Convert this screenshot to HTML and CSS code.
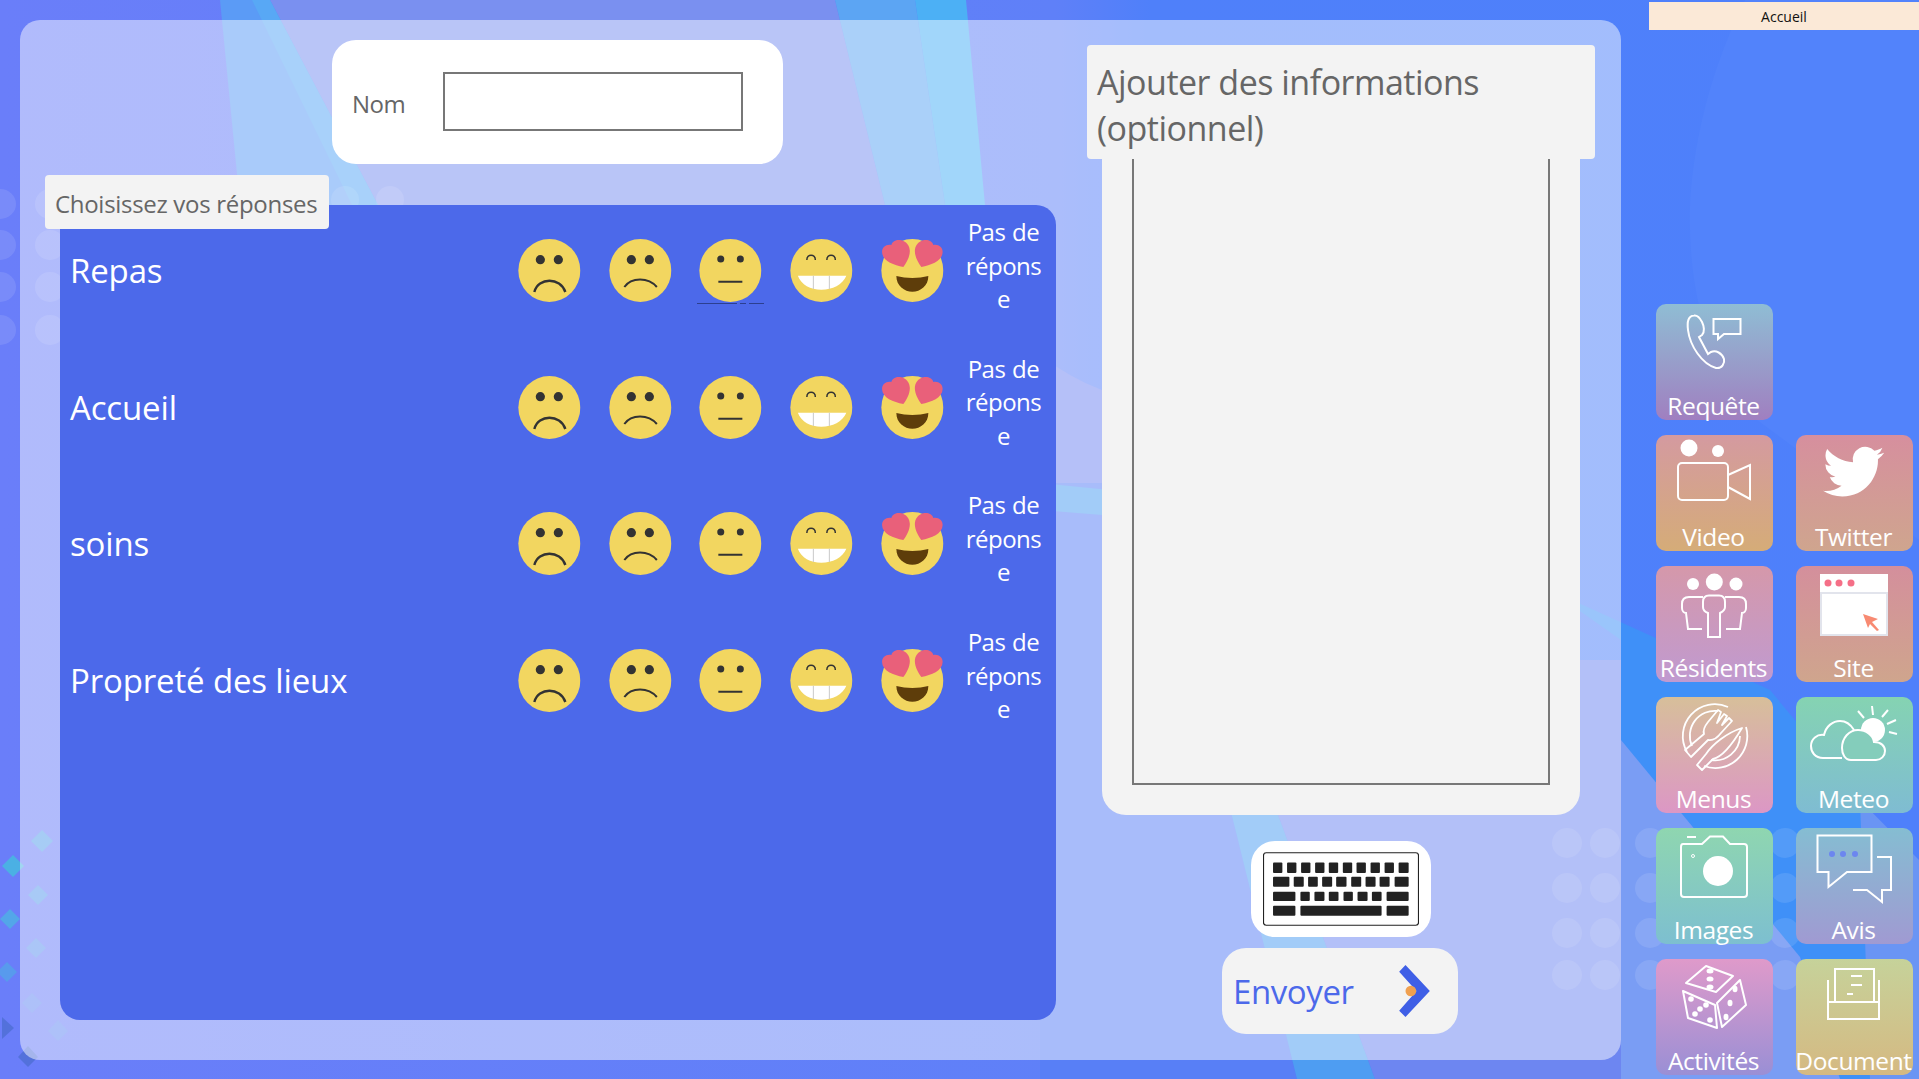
FILE: index.html
```html
<!DOCTYPE html>
<html lang="fr">
<head>
    <meta charset="UTF-8">
    <title>Accueil</title>
    <link rel="stylesheet" href="styles.css">
</head>
<body>
    <!-- decorative wallpaper -->
    <svg class="wallpaper" viewBox="0 0 1919 1079" preserveAspectRatio="none">
        <defs>
            <linearGradient id="wall" x1="0" y1="0" x2="1" y2="0">
                <stop offset="0" stop-color="#6a7ef9"/>
                <stop offset="0.55" stop-color="#5f80f8"/>
                <stop offset="0.6" stop-color="#4f80fa"/>
                <stop offset="1" stop-color="#4e80fb"/>
            </linearGradient>
        </defs>
        <rect width="1919" height="1079" fill="url(#wall)"/>
        <path d="M270 0H835L885 205H378Z" fill="#7a90f0"/>
        <path d="M220 0H270L378 205H240Z" fill="#5b9bf6"/>
        <path d="M252 0H270L378 205H352Z" fill="#58a8f5"/>
        <path d="M835 0H915L945 205H885Z" fill="#5ca5f3"/>
        <path d="M915 0H966L985 205H945Z" fill="#4cb0f5"/>
        <path d="M1040 355Q1070 378 1102 390V483H1040Z" fill="#7186f2"/>
        <path d="M1040 483H1102C1180 560 1210 740 1233 820L1297 1079H1040Z" fill="#587ff6"/>
        <path d="M1040 483L1110 490C1190 560 1240 720 1280 820L1375 1079H1297L1233 820C1200 700 1170 560 1102 515L1040 510Z" fill="#4e9df2"/>
        <path d="M1280 820C1260 770 1240 720 1215 660H1621V1079H1375Z" fill="#6d86f1"/>
        <path d="M1550 590L1770 690L1919 870V1079H1621V640Z" fill="#3f90f8"/>
        <path d="M1621 740L1800 957L1840 1079H1621Z" fill="#7a9df4"/>
        <path d="M1860 800L1919 860V1079H1870Z" fill="#6a95f4"/>
        <path d="M1745 0C1700 90 1688 180 1690 230C1692 290 1700 320 1730 400L1919 540V0Z" fill="#5283fb"/>
        <g fill="#fff" opacity=".1">
            <ellipse cx="0" cy="204" rx="16" ry="15"/><ellipse cx="50" cy="204" rx="15" ry="15"/>
            <ellipse cx="0" cy="245" rx="16" ry="15"/><ellipse cx="50" cy="245" rx="15" ry="15"/>
            <ellipse cx="0" cy="287" rx="16" ry="15"/><ellipse cx="50" cy="287" rx="15" ry="15"/>
            <ellipse cx="0" cy="330" rx="16" ry="15"/><ellipse cx="50" cy="330" rx="15" ry="15"/>
            <ellipse cx="345" cy="200" rx="14" ry="14"/><ellipse cx="390" cy="200" rx="14" ry="14"/>
            <circle cx="1567" cy="843" r="15"/><circle cx="1605" cy="843" r="15"/>
            <circle cx="1567" cy="888" r="15"/><circle cx="1605" cy="888" r="15"/>
            <circle cx="1567" cy="933" r="15"/><circle cx="1605" cy="933" r="15"/>
            <circle cx="1567" cy="975" r="15"/><circle cx="1605" cy="975" r="15"/>
            <circle cx="1650" cy="843" r="15"/><circle cx="1650" cy="888" r="15"/><circle cx="1650" cy="933" r="15"/><circle cx="1650" cy="975" r="15"/>
            <circle cx="1785" cy="843" r="15"/><circle cx="1785" cy="888" r="15"/><circle cx="1785" cy="933" r="15"/><circle cx="1785" cy="975" r="15"/>
        </g>
        <g fill="#3fc6dc">
            <path d="M42 830l11 11-11 11-11-11Z" opacity=".45"/>
            <path d="M13 855l11 11-11 11-11-11Z" opacity=".7"/>
            <path d="M38 885l10 10-10 10-10-10Z" opacity=".4"/>
            <path d="M10 909l10 10-10 10-10-10Z" opacity=".55"/>
            <path d="M36 938l10 10-10 10-10-10Z" opacity=".28"/>
            <path d="M7 962l10 10-10 10-10-10Z" opacity=".4"/>
            <path d="M32 993l10 10-10 10-10-10Z" opacity=".14"/>
            <path d="M58 1020l10 11-10 10-10-10Z" opacity=".14"/>
            <path d="M2 1017l12 11-12 11Z" fill="#4a6ccf" opacity=".7"/>
            <path d="M28 1046l10 11-10 10-10-10Z" fill="#4a6ccf" opacity=".7"/>
        </g>
    </svg>

    <!-- shared smileys -->
    <svg class="sprites" aria-hidden="true">
        <symbol id="face-bad" viewBox="0 0 62 63">
            <ellipse cx="31" cy="31.5" rx="31" ry="31.5" fill="#f2d660"/>
            <circle cx="22" cy="20.7" r="4.6" fill="#333"/><circle cx="40" cy="20.7" r="4.6" fill="#333"/>
            <path d="M16 53C20 38 42 38 47 53" fill="none" stroke="#333" stroke-width="2.4"/>
        </symbol>
        <symbol id="face-low" viewBox="0 0 62 63">
            <ellipse cx="31" cy="31.5" rx="31" ry="31.5" fill="#f2d660"/>
            <circle cx="22" cy="20.7" r="4.6" fill="#333"/><circle cx="40" cy="20.7" r="4.6" fill="#333"/>
            <path d="M15 48C22 38 39 38 47.5 48" fill="none" stroke="#333" stroke-width="2"/>
        </symbol>
        <symbol id="face-mid" viewBox="0 0 62 63">
            <ellipse cx="31" cy="31.5" rx="31" ry="31.5" fill="#f2d660"/>
            <circle cx="21.4" cy="20" r="3.5" fill="#333"/><circle cx="41" cy="20" r="3.5" fill="#333"/>
            <path d="M19 42.7H43" stroke="#333" stroke-width="2"/>
        </symbol>
        <symbol id="face-good" viewBox="0 0 62 63">
            <ellipse cx="31" cy="31.5" rx="31" ry="31.5" fill="#f2d660"/>
            <path d="M16.5 21C16.5 14.500 25 14.500 25 21M36.500 21C36.500 14.500 45 14.500 45 21" fill="none" stroke="#333" stroke-width="1.500"/>
            <path d="M7.500 36.700H56C52 46 42 50.700 31 50.700S11 46 7.500 36.700Z" fill="#fff"/>
            <path d="M23 36.700V50M39 36.700V50" stroke="#c9c9c9" stroke-width="1"/>
        </symbol>
        <symbol id="face-love" viewBox="0 0 62 63">
            <ellipse cx="31" cy="31.5" rx="31" ry="31.5" fill="#f2d660"/>
            <path d="M15 37C25 39.500 37 39.500 47 37C47 47 39 52.700 31 52.700S15 47 15 37Z" fill="#5e3d0a"/>
            <path d="M22 28C12 26 1 22 .7 13C.7 8 5 5 10 6C11 2 15 .5 19 1C25 2 28.500 7 28.500 12C28.500 18 25 24 22 28Z" fill="#e9607a"/>
            <path d="M40 28C50 26 61 22 61.300 13C61.300 8 57 5 52 6C51 2 47 .5 43 1C37 2 33.500 7 33.500 12C33.500 18 37 24 40 28Z" fill="#e9607a"/>
        </symbol>
    </svg>

    <main class="panel">
        <section class="survey">
            <div class="name-card">
                <label class="name-label" for="nom">Nom</label>
                <input class="name-input" id="nom" type="text">
            </div>
            <div class="survey-tag">Choisissez vos réponses</div>
            <div class="survey-board">
                <div class="survey-row">
                    <span class="row-label">Repas</span>
                    <div class="faces">
                        <svg class="face"><use href="#face-bad"/></svg>
                        <svg class="face"><use href="#face-low"/></svg>
                        <svg class="face"><use href="#face-mid"/><path class="face-smear" d="M-2 64.500H65"/></svg>
                        <svg class="face"><use href="#face-good"/></svg>
                        <svg class="face"><use href="#face-love"/></svg>
                    </div>
                    <span class="no-answer">Pas de répons e</span>
                </div>
                <div class="survey-row">
                    <span class="row-label">Accueil</span>
                    <div class="faces">
                        <svg class="face"><use href="#face-bad"/></svg>
                        <svg class="face"><use href="#face-low"/></svg>
                        <svg class="face"><use href="#face-mid"/></svg>
                        <svg class="face"><use href="#face-good"/></svg>
                        <svg class="face"><use href="#face-love"/></svg>
                    </div>
                    <span class="no-answer">Pas de répons e</span>
                </div>
                <div class="survey-row">
                    <span class="row-label">soins</span>
                    <div class="faces">
                        <svg class="face"><use href="#face-bad"/></svg>
                        <svg class="face"><use href="#face-low"/></svg>
                        <svg class="face"><use href="#face-mid"/></svg>
                        <svg class="face"><use href="#face-good"/></svg>
                        <svg class="face"><use href="#face-love"/></svg>
                    </div>
                    <span class="no-answer">Pas de répons e</span>
                </div>
                <div class="survey-row">
                    <span class="row-label">Propreté des lieux</span>
                    <div class="faces">
                        <svg class="face"><use href="#face-bad"/></svg>
                        <svg class="face"><use href="#face-low"/></svg>
                        <svg class="face"><use href="#face-mid"/></svg>
                        <svg class="face"><use href="#face-good"/></svg>
                        <svg class="face"><use href="#face-love"/></svg>
                    </div>
                    <span class="no-answer">Pas de répons e</span>
                </div>
            </div>
        </section>

        <section class="notes">
            <h2 class="notes-title">Ajouter des informations (optionnel)</h2>
            <div class="notes-card">
                <textarea class="notes-input"></textarea>
            </div>
            <button class="keyboard-btn" type="button" aria-label="Clavier">
                <svg class="keyboard-icon" viewBox="188 95 467 220">
                    <rect x="189.500" y="96.500" width="464" height="217" rx="8" fill="none" stroke="#222" stroke-width="3.500"/>
                    <g fill="#222">
                        <rect x="218" y="126" width="28" height="31" rx="3"/><rect x="260" y="126" width="28" height="31" rx="3"/><rect x="302" y="126" width="28" height="31" rx="3"/><rect x="344" y="126" width="28" height="31" rx="3"/><rect x="385" y="126" width="28" height="31" rx="3"/><rect x="427" y="126" width="28" height="31" rx="3"/><rect x="468" y="126" width="28" height="31" rx="3"/><rect x="510" y="126" width="28" height="31" rx="3"/><rect x="552" y="126" width="28" height="31" rx="3"/><rect x="594" y="126" width="30" height="31" rx="3"/>
                        <rect x="218" y="168" width="49" height="30" rx="3"/><rect x="280" y="168" width="30" height="30" rx="3"/><rect x="323" y="168" width="29" height="30" rx="3"/><rect x="365" y="168" width="30" height="30" rx="3"/><rect x="407" y="168" width="31" height="30" rx="3"/><rect x="452" y="168" width="30" height="30" rx="3"/><rect x="495" y="168" width="30" height="30" rx="3"/><rect x="537" y="168" width="30" height="30" rx="3"/><rect x="582" y="168" width="42" height="30" rx="3"/>
                        <rect x="218" y="213" width="67" height="28" rx="3"/><rect x="300" y="213" width="28" height="28" rx="3"/><rect x="342" y="213" width="30" height="28" rx="3"/><rect x="385" y="213" width="29" height="28" rx="3"/><rect x="429" y="213" width="28" height="28" rx="3"/><rect x="471" y="213" width="30" height="28" rx="3"/><rect x="514" y="213" width="29" height="28" rx="3"/><rect x="558" y="213" width="66" height="28" rx="3"/>
                        <rect x="218" y="255" width="67" height="30" rx="3"/><rect x="300" y="255" width="243" height="30" rx="3"/><rect x="558" y="255" width="66" height="30" rx="3"/>
                    </g>
                </svg>
            </button>
            <button class="send-btn" type="button">
                <span>Envoyer</span>
                <svg class="send-icon" viewBox="598 435 92 156">
                    <path d="M598 455L617 435L690 513L617 591L598 572L650 513Z" fill="#3f5fe6"/>
                    <circle cx="633" cy="513" r="16" fill="#f0a050"/>
                </svg>
            </button>
        </section>
    </main>

    <aside class="sidebar">
        <button class="home-btn" type="button">Accueil</button>
        <nav class="tiles">
            <a class="tile tile-requete">
                <svg class="tile-icon" viewBox="0 0 117 84" fill="none" stroke="#fff" stroke-width="2">
                    <path d="M38 11.500C32 12 31 18 32 26C34 42 46 60 60 64C66 65 69 59 68 55C66 49 60 46 55 48L52 50L43 33L46 31C49 28 48 22 46 18C44 14 42 11 38 11.500Z"/>
                    <path d="M57.500 15H84.500V30H68L62 35V30H57.500Z"/>
                </svg>
                <span class="tile-label">Requête</span>
            </a>
            <span class="tile-gap"></span>
            <a class="tile tile-video">
                <svg class="tile-icon" viewBox="0 0 117 84" fill="none" stroke="#fff" stroke-width="2">
                    <circle cx="33" cy="13" r="8.500" fill="#fff" stroke="none"/>
                    <circle cx="62" cy="16" r="6" fill="#fff" stroke="none"/>
                    <rect x="22" y="28" width="50" height="37" rx="4"/>
                    <path d="M72 40L94 30V64L72 52"/>
                </svg>
                <span class="tile-label">Video</span>
            </a>
            <a class="tile tile-twitter">
                <svg class="tile-icon" viewBox="0 0 117 84">
                    <path transform="translate(27 6) scale(2.550)" fill="#fff" d="M23.953 4.570a10 10 0 01-2.825.775 4.958 4.958 0 002.163-2.723c-.951.555-2.005.959-3.127 1.184a4.920 4.920 0 00-8.384 4.482C7.690 8.095 4.067 6.130 1.640 3.162a4.822 4.822 0 00-.666 2.475c0 1.710.870 3.213 2.188 4.096a4.904 4.904 0 01-2.228-.616v.060a4.923 4.923 0 003.946 4.827 4.996 4.996 0 01-2.212.085 4.936 4.936 0 004.604 3.417 9.867 9.867 0 01-6.102 2.105c-.390 0-.779-.023-1.170-.067a13.995 13.995 0 007.557 2.209c9.053 0 13.998-7.496 13.998-13.985 0-.210 0-.420-.015-.630A9.935 9.935 0 0024 4.590z"/>
                </svg>
                <span class="tile-label">Twitter</span>
            </a>
            <a class="tile tile-residents">
                <svg class="tile-icon" viewBox="0 0 117 84" fill="none" stroke="#fff" stroke-width="2">
                    <circle cx="37" cy="18" r="6" fill="#fff" stroke="none"/>
                    <circle cx="58.300" cy="16" r="8.500" fill="#fff" stroke="none"/>
                    <circle cx="80" cy="18" r="6.500" fill="#fff" stroke="none"/>
                    <path d="M47 36C47 31 50 29.500 53 29.500H63C66 29.500 69 31 69 36V41C69 44 66 46 64 47V71H52V47C49 46 47 44 47 41Z"/>
                    <path d="M47 31H33C28 31 26 34 26 38V42C26 45 28 47 30 47L32 63H46"/>
                    <path d="M69 31H83C88 31 90 34 90 38V42C90 45 88 47 86 47L84 63H70"/>
                </svg>
                <span class="tile-label">Résidents</span>
            </a>
            <a class="tile tile-site">
                <svg class="tile-icon" viewBox="0 0 117 84">
                    <rect x="24" y="8" width="68" height="62" fill="#fff"/>
                    <rect x="25" y="27" width="66" height="42" fill="none" stroke="#e2e4ec" stroke-width="2"/>
                    <circle cx="32" cy="17" r="3.500" fill="#f56f87"/><circle cx="43" cy="17" r="3.500" fill="#f56f87"/><circle cx="55" cy="17" r="3.500" fill="#f56f87"/>
                    <path d="M67 48L82 53L76 56L83 64L81 65L74 58L72 62Z" fill="#f88a72"/>
                </svg>
                <span class="tile-label">Site</span>
            </a>
            <a class="tile tile-menus">
                <svg class="tile-icon" viewBox="0 0 117 84" fill="none" stroke="#fff" stroke-width="1.800" stroke-linejoin="round">
                    <path d="M31 55A32 32 0 0 1 72 10"/>
                    <path d="M90 30A32 32 0 0 1 48 69"/>
                    <path d="M36 49A25 25 0 0 1 62 14"/>
                    <path d="M84 39A25 25 0 0 1 55 63"/>
                    <path d="M29 53L35 60L52 43C58 44 62 40 65 36L76 24L73 21L66 28L71 19L68 17L61 26L65 15L62 13L52 25C48 30 47 34 48 37Z"/>
                    <path d="M41 68L46 73L57 62C66 60 76 48 86 31C70 36 56 48 50 57Z"/>
                </svg>
                <span class="tile-label">Menus</span>
            </a>
            <a class="tile tile-meteo">
                <svg class="tile-icon" viewBox="0 0 117 84" fill="none" stroke="#fff" stroke-width="2">
                    <circle cx="77" cy="33" r="12" fill="#fff" stroke="none"/>
                    <path d="M62 14L68 21M76 9L77 18M92 13L86 20M100 23L91 27M101 37L93 35"/>
                    <path d="M27 61C19 61 15 55 15 49C15 42 21 37 28 38C30 29 37 24 44 24C50 24 55 28 58 33M46 61H27"/>
                    <path d="M55 63C49 63 46 57 46 51C46 41 53 33 62 33C70 33 77 38 78 45C85 45 89 49 89 54C89 59 85 63 80 63Z" fill="#84cdbb"/>
                </svg>
                <span class="tile-label">Meteo</span>
            </a>
            <a class="tile tile-images">
                <svg class="tile-icon" viewBox="0 0 117 84" fill="none" stroke="#fff" stroke-width="2">
                    <path d="M27 16H46L54 8.500H67L74 16H88C90 16 91 17 91 19V66C91 68 90 69 88 69H28C26 69 25 68 25 66V19C25 17 26 16 27 16Z"/>
                    <path d="M31 9H40"/>
                    <circle cx="37" cy="28" r="1.500" stroke-width="1"/>
                    <circle cx="62" cy="43" r="15" fill="#fff" stroke="none"/>
                </svg>
                <span class="tile-label">Images</span>
            </a>
            <a class="tile tile-avis">
                <svg class="tile-icon" viewBox="0 0 117 84" fill="none" stroke="#fff" stroke-width="2">
                    <path d="M21.500 7.500H75.500V44H51L32.500 59V44H21.500Z"/>
                    <path d="M81 29H95V62H86V74L71 62H57"/>
                    <circle cx="36" cy="26" r="3" fill="#6c86ef" stroke="none"/><circle cx="47" cy="26" r="3" fill="#6c86ef" stroke="none"/><circle cx="59" cy="26" r="3" fill="#6c86ef" stroke="none"/>
                </svg>
                <span class="tile-label">Avis</span>
            </a>
            <a class="tile tile-activites">
                <svg class="tile-icon" viewBox="0 0 117 84" fill="none" stroke="#fff" stroke-width="2" stroke-linejoin="round">
                    <path d="M30 24L50 7L77 17L60 33Z"/>
                    <path d="M27 32L59 46L61 69L32 59Z"/>
                    <path d="M84 21L90 46L66 68L61 44Z"/>
                    <g fill="#fff" stroke="none">
                        <ellipse cx="54" cy="12" rx="3.500" ry="2.500"/><ellipse cx="54" cy="20" rx="3.500" ry="2.500"/><ellipse cx="54" cy="28" rx="3.500" ry="2.500"/>
                        <circle cx="35" cy="40" r="2.800"/><circle cx="50" cy="46" r="2.800"/><circle cx="39" cy="55" r="2.800"/><circle cx="54" cy="61" r="2.800"/><circle cx="44" cy="50" r="2.800"/>
                        <ellipse cx="79" cy="30" rx="2.500" ry="3.200"/><ellipse cx="74" cy="44" rx="2.500" ry="3.200"/><ellipse cx="70" cy="58" rx="2.500" ry="3.200"/>
                    </g>
                </svg>
                <span class="tile-label">Activités</span>
            </a>
            <a class="tile tile-document">
                <svg class="tile-icon" viewBox="0 0 117 84" fill="none" stroke="#fff" stroke-width="2">
                    <path d="M32 21V60H83V21M32 43H83"/>
                    <path d="M39 43V10H78V43"/>
                    <path d="M55 17H66M55 26H66M51 35H57"/>
                </svg>
                <span class="tile-label">Document</span>
            </a>
        </nav>
    </aside>
</body>
</html>
```

FILE: styles.css
```css
* {
    box-sizing: border-box;
}

html,
body {
    margin: 0;
    height: 100%;
}

body {
    position: relative;
    display: flex;
    height: 1079px;
    overflow: hidden;
    font-family: "Open Sans", "Noto Sans", sans-serif;
}

.wallpaper {
    position: absolute;
    top: 0;
    left: 0;
    width: 1919px;
    height: 1079px;
    z-index: -1;
}

.sprites {
    position: absolute;
    width: 0;
    height: 0;
}

/* main panel */
.panel {
    display: flex;
    flex: none;
    width: 1601px;
    height: 1040px;
    margin: 20px 0 0 20px;
    background-color: rgba(255, 255, 255, 0.48);
    border-radius: 20px;
}

.survey {
    flex: none;
    width: 996px;
    margin-left: 40px;
}

.name-card {
    display: flex;
    align-items: center;
    width: 451px;
    height: 124px;
    margin: 20px 0 0 272px;
    padding-left: 20px;
    background-color: #fff;
    border-radius: 24px;
}

.name-label {
    width: 91px;
    margin-top: 2px;
    font-size: 24px;
    letter-spacing: -0.5px;
    color: #666;
}

.name-input {
    width: 300px;
    height: 59px;
    margin-top: -2px;
    border: 2px solid #777;
    background-color: #fff;
}

.survey-tag {
    position: relative;
    width: 284px;
    height: 54px;
    margin: 11px 0 -24px -15px;
    padding: 2px 0 0 10px;
    font-size: 24px;
    letter-spacing: -0.3px;
    line-height: 54px;
    white-space: nowrap;
    color: #666;
    background-color: #f3f3f3;
    border-radius: 4px;
}

.survey-board {
    height: 815px;
    padding: 11px 0 0 10px;
    background-color: #4c69ea;
    border-radius: 20px;
}

.survey-row {
    display: flex;
    align-items: flex-start;
    height: 136.7px;
}

.row-label {
    width: 448px;
    padding-top: 33px;
    font-size: 33px;
    letter-spacing: -0.15px;
    line-height: 44px;
    color: #fff;
}

.faces {
    display: flex;
    gap: 28px;
    padding-top: 23px;
}

.face {
    display: block;
    width: 62.7px;
    height: 63px;
    overflow: visible;
}

.face-smear {
    fill: none;
    stroke: #2c3f90;
    stroke-width: 1;
    stroke-dasharray: 40 3 6 3 16;
}

.no-answer {
    width: 76px;
    margin: -1px 0 0 22px;
    font-size: 24px;
    letter-spacing: -0.5px;
    line-height: 33.5px;
    text-align: center;
    color: #fff;
    word-spacing: 1px;
}

/* right column */
.notes {
    display: flex;
    flex-direction: column;
    align-items: center;
    flex: none;
    width: 508px;
    margin: 25px 0 0 31px;
}

.notes-title {
    position: relative;
    width: 508px;
    height: 114px;
    margin: 0;
    padding: 14px 10px 0 10px;
    font-size: 34px;
    font-weight: 400;
    letter-spacing: -0.5px;
    line-height: 46px;
    color: #666;
    background-color: #f3f3f3;
    border-radius: 4px;
}

.notes-card {
    width: 478px;
    height: 656px;
    padding: 0 30px;
    background-color: #f3f3f3;
    border-radius: 0 0 24px 24px;
}

.notes-input {
    display: block;
    width: 100%;
    height: 626px;
    border: 2px solid #777;
    border-top: none;
    background: transparent;
    resize: none;
}

.keyboard-btn {
    display: flex;
    align-items: center;
    justify-content: center;
    width: 180px;
    height: 96px;
    margin-top: 26px;
    padding: 0;
    border: none;
    background-color: #fff;
    border-radius: 24px;
}

.keyboard-icon {
    display: block;
    width: 156px;
    height: 74px;
}

.send-btn {
    display: flex;
    align-items: center;
    width: 236px;
    height: 86px;
    margin: 11px 2px 0 0;
    padding: 0 0 0 11px;
    border: none;
    font-family: inherit;
    font-size: 33px;
    letter-spacing: -0.4px;
    color: #4c69ea;
    background-color: #f3f3f3;
    border-radius: 24px;
}

.send-icon {
    width: 31px;
    height: 52px;
    margin-left: 45px;
}

/* sidebar */
.sidebar {
    flex: none;
    width: 270px;
    margin-left: 28px;
    padding-top: 2px;
}

.home-btn {
    display: block;
    width: 270px;
    height: 28px;
    padding: 0;
    border: none;
    font-family: inherit;
    font-size: 14px;
    color: #111;
    background-color: #fbe9d7;
}

.tiles {
    display: grid;
    grid-template-columns: 117px 117px;
    grid-auto-rows: 116px;
    gap: 15px 23px;
    margin: 274px 0 0 7px;
}

.tile {
    display: flex;
    flex-direction: column;
    align-items: center;
    color: #fff;
    border-radius: 10px;
}

.tile-icon {
    display: block;
    flex: none;
    width: 117px;
    height: 84px;
    margin-bottom: 4px;
}

.tile-label {
    margin-right: 2px;
    font-size: 24.5px;
    letter-spacing: -0.4px;
    line-height: 28px;
    white-space: nowrap;
}

.tile-requete { background-image: linear-gradient(#8fbdd4, #a07fc0); }
.tile-video { background-image: linear-gradient(#d49aa0, #d5ac78); }
.tile-twitter { background-image: linear-gradient(#d68f9e, #cfa58e); }
.tile-residents { background-image: linear-gradient(#d598aa, #c09ad0); }
.tile-site { background-image: linear-gradient(#d48f9c, #cfa58d); }
.tile-menus { background-image: linear-gradient(#d7bf9a, #dc97c5); }
.tile-meteo { background-image: linear-gradient(#85d3b2, #7fbcd2); }
.tile-images { background-image: linear-gradient(#8fd6b0, #7dbfd0); }
.tile-avis { background-image: linear-gradient(#85bdd2, #a09ad2); }
.tile-activites { background-image: linear-gradient(#df9aca, #9a8fd5); }
.tile-document { background-image: linear-gradient(#c6d29a, #d5b982); }
```
